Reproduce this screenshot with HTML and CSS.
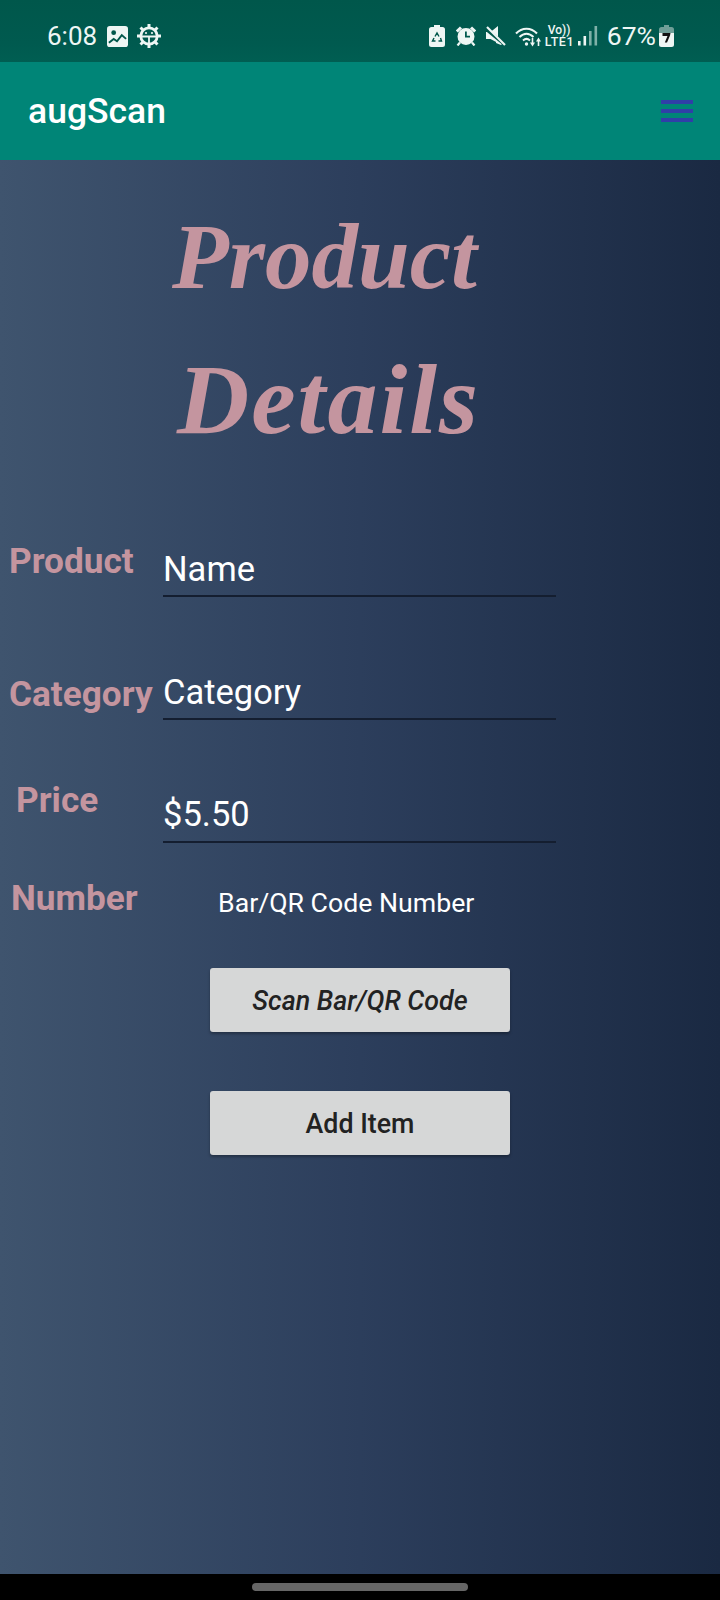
FILE: index.html
```html
<!DOCTYPE html>
<html lang="en">
<head>
<meta charset="utf-8">
<title>augScan</title>
<link rel="stylesheet" href="styles.css">
</head>
<body>
<div class="screen">
  <header class="status">
    <span class="time">6:08</span>
    <svg class="ic-image" viewBox="0 0 22 22"><rect width="22" height="22" rx="3" fill="#eef6f4"/><circle cx="7" cy="7" r="2.500" fill="#00574b"/><path fill="none" stroke="#00574b" stroke-width="2" d="M2 17.500l5-4 3.500 2.500 5-6.500 4.500 4"/></svg>
    <svg class="ic-gear" viewBox="0 0 24 24"><g fill="none" stroke="#eef6f4"><circle cx="12" cy="12" r="8.200" stroke-width="2.800"/><path stroke-width="3" d="M12 0v3.500M12 20.500v3.500M0 12h3.500M20.500 12h3.500M3.500 3.500l2.500 2.500M18 18l2.500 2.500M20.500 3.500L18 6M6 18l-2.500 2.500"/><path stroke-width="1.800" d="M5 12.500h14M12 12.500v7"/></g><circle cx="9" cy="9" r="1.100" fill="#eef6f4"/><circle cx="15" cy="9" r="1.100" fill="#eef6f4"/></svg>
    <span class="status-gap"></span>
    <svg class="ic-batt" viewBox="0 0 16 22"><path fill="#eef6f4" d="M5 0h6v2h2.500A2.500 2.500 0 0 1 16 4.500V19.500A2.500 2.500 0 0 1 13.500 22H2.500A2.500 2.500 0 0 1 0 19.500V4.500A2.500 2.500 0 0 1 2.500 2H5z"/><path fill="none" stroke="#00574b" stroke-width="1.400" d="M6 11.500l2-3.500 2 3.500M11.500 13l1 3H9.500M6.500 16H3.500l1.500-3"/></svg>
    <svg class="ic-alarm" viewBox="0 0 20 20"><path fill="#eef6f4" fill-rule="evenodd" d="M10 2a8.500 8.500 0 1 1 0 17a8.500 8.500 0 0 1 0-17zM9 5.500v6h5v-1.800h-3.200v-4.200z"/><path stroke="#eef6f4" stroke-width="3" d="M.8 5.500L5 1.500M19.200 5.500L15 1.500"/><path stroke="#eef6f4" stroke-width="2.200" d="M4 16.500l-2.500 3M16 16.500l2.500 3"/></svg>
    <svg class="ic-mute" viewBox="0 0 20 20"><path fill="#eef6f4" d="M0 6h4.500L12 0v17L4.500 13H0z"/><path fill="#eef6f4" d="M10 11l7 6-2 2-5-2z"/><path stroke="#00574b" stroke-width="3.500" d="M0 3l17 14"/><path stroke="#eef6f4" stroke-width="2.200" d="M1 1l18 18"/></svg>
    <svg class="ic-wifi" viewBox="0 0 26 21"><g fill="none" stroke="#eef6f4" stroke-width="2"><path d="M1 7.500C7 1 16 1 22 7.500M4.500 11C9 6.500 14 6.500 18.500 11M8 14.500c2.500-2.300 4.500-2.300 7 0"/></g><circle cx="11.500" cy="18" r="1.700" fill="#eef6f4"/><path stroke="#eef6f4" stroke-width="1.600" d="M17.500 12v6M23.500 14v6"/><path fill="#eef6f4" d="M15 16.500h5L17.500 20.500zM21 15.500h5L23.500 11.500z"/></svg>
    <span class="volte"><span>Vo))</span><span>LTE1</span></span>
    <svg class="ic-signal" viewBox="0 0 20 20"><rect x="0" y="15" width="2.600" height="4.500" fill="#eef6f4"/><rect x="5.500" y="10" width="2.600" height="9.500" fill="#eef6f4"/><rect x="11" y="5" width="2.600" height="14.500" fill="#7fb0a8"/><rect x="16.500" y="0" width="2.600" height="19.500" fill="#7fb0a8"/></svg>
    <span class="pct">67%</span>
    <svg class="ic-charge" viewBox="0 0 15 22"><path fill="#6f9f98" d="M5 0h5v2h2.500A2.500 2.500 0 0 1 15 4.500V8H0V4.500A2.500 2.500 0 0 1 2.500 2H5z"/><path fill="#eef6f4" d="M0 8h15v11.500a2.500 2.500 0 0 1-2.500 2.500h-10A2.500 2.500 0 0 1 0 19.500z"/><path fill="#111" d="M3.500 8h8l-.5 2.500-3 7H5.800l2.700-6.500H3.500z"/></svg>
  </header>
  <nav class="appbar">
    <span class="app-title">augScan</span>
    <span class="menu"><i></i><i></i><i></i></span>
  </nav>
  <main class="content">
    <h1 class="heading"><span class="heading-line">Product</span><span class="heading-line heading-second">Details</span></h1>
    <form class="form">
      <div class="row row-name">
        <label class="label">Product</label>
        <div class="field"><span>Name</span></div>
      </div>
      <div class="row row-cat">
        <label class="label">Category</label>
        <div class="field"><span>Category</span></div>
      </div>
      <div class="row row-price">
        <label class="label">Price</label>
        <div class="field"><span>$5.50</span></div>
      </div>
      <div class="row row-num">
        <label class="label">Number</label>
        <div class="code">Bar/QR Code Number</div>
      </div>
      <div class="buttons">
        <button type="button" class="btn btn-scan">Scan Bar/QR Code</button>
        <button type="button" class="btn">Add Item</button>
      </div>
    </form>
  </main>
  <footer class="navbar"><span class="pill"></span></footer>
</div>
</body>
</html>
```
FILE: styles.css
```css
* { box-sizing: border-box; }
html, body { margin: 0; padding: 0; }
body { width: 720px; height: 1600px; overflow: hidden; font-family: Roboto, "Liberation Sans", sans-serif; background: #000; }
.screen { width: 720px; height: 1600px; display: flex; flex-direction: column; }

.status { height: 62px; flex: none; display: flex; align-items: center; padding: 10px 46px 0 47px; color: #eef6f4; background: linear-gradient(#00574b, #005a4f 70%, #005e52); }
.time { font-size: 26px; line-height: 30px; width: 60px; }
.ic-image { width: 21px; height: 21px; margin-right: 9px; }
.ic-gear { width: 24px; height: 24px; }
.status-gap { flex: 1; }
.ic-batt { width: 16px; height: 22px; margin-right: 11px; }
.ic-alarm { width: 20px; height: 20px; margin-right: 10px; }
.ic-mute { width: 20px; height: 20px; margin-right: 9px; }
.ic-wifi { width: 26px; height: 21px; margin-right: 4px; }
.volte { display: flex; flex-direction: column; font-size: 12.500px; line-height: 11px; font-weight: 500; width: 30px; margin-right: 3px; white-space: nowrap; }
.volte span:first-child { padding-left: 3px; font-size: 12px; }
.volte span:last-child { letter-spacing: .6px; }
.ic-signal { width: 20px; height: 20px; margin-right: 9px; }
.pct { font-size: 26.500px; line-height: 30px; margin-right: 3px; }
.ic-charge { width: 15px; height: 22px; }

.appbar { height: 98px; flex: none; display: flex; align-items: center; justify-content: space-between; padding: 0 27px 0 28px; background: #008577; }
.app-title { font-size: 35.500px; font-weight: 500; color: #fff; }
.menu { display: flex; flex-direction: column; gap: 5px; width: 32px; }
.menu i { display: block; height: 4px; background: #303fa8; }

.content { flex: 1; display: flex; flex-direction: column; background: linear-gradient(90deg, #3f546e 0%, #2c3e5c 50%, #1a2942 100%); }
.heading { margin: 25px 0 0; padding-left: 172px; display: flex; flex-direction: column; font-family: "Liberation Serif", serif; font-style: italic; font-weight: 700; font-size: 93px; line-height: 143px; color: #c4959f; }
.heading-second { padding-left: 5px; font-size: 100px; letter-spacing: 2px; }

.form { display: flex; flex-direction: column; }
.row { display: grid; grid-template-columns: 163px 393px; height: 123px; }
.row-name { margin-top: 50px; }
.label { font-size: 35.200px; font-weight: 700; color: #c4959f; line-height: 40px; padding: 20px 0 0 9px; white-space: nowrap; }
.row-cat .label { padding-top: 30px; }
.row-price .label { padding: 13px 0 0 16px; }
.field { height: 76px; border-bottom: 2px solid #141e30; color: #fff; font-size: 34.500px; line-height: 40px; padding: 28px 0 0 0; }
.row-price .field { padding-top: 27px; }
.row-num { height: 62px; margin-top: -12px; }
.row-num .label { padding: 0 0 0 11px; }
.code { color: #fff; font-size: 26.700px; line-height: 32px; padding: 9px 0 0 55px; white-space: nowrap; }

.buttons { display: flex; flex-direction: column; gap: 59px; padding-left: 210px; margin-top: 28px; }
.btn { width: 300px; height: 64px; border: 0; border-radius: 3px; padding: 2px 0 0; background: #d6d7d7; color: #222; font-family: Roboto, sans-serif; font-size: 26.800px; font-weight: 500; box-shadow: 0 2px 3px rgba(0,0,0,.3); }
.btn-scan { font-style: italic; }

.navbar { height: 26px; flex: none; background: #000; display: flex; justify-content: center; padding-top: 9px; }
.pill { width: 216px; height: 8px; border-radius: 4px; background: #666; }
```
